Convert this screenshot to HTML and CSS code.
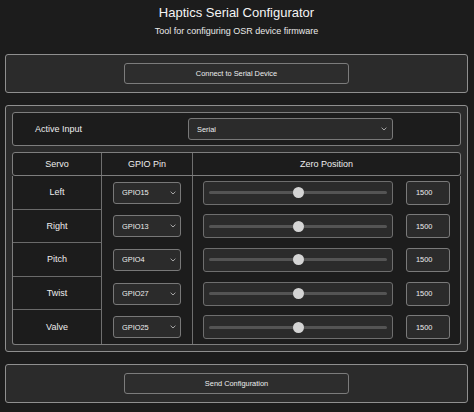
FILE: index.html
```html
<!DOCTYPE html>
<html lang="en">
<head>
<meta charset="utf-8">
<title>Haptics Serial Configurator</title>
<link rel="stylesheet" href="styles.css">
</head>
<body>
<div class="app">
  <header class="header">
    <h1 class="title">Haptics Serial Configurator</h1>
    <p class="subtitle">Tool for configuring OSR device firmware</p>
  </header>

  <section class="panel panel-first panel-action">
    <button class="btn">Connect to Serial Device</button>
  </section>

  <section class="panel panel-config">
    <div class="input-row">
      <div class="input-label">Active Input</div>
      <select class="select select-wide"><option>Serial</option></select>
    </div>

    <div class="servo-table">
      <div class="thead">
        <div class="th col-servo">Servo</div>
        <div class="th col-gpio">GPIO Pin</div>
        <div class="th">Zero Position</div>
      </div>
      <div class="tbody">
        <div class="tr">
          <div class="td col-servo name">Left</div>
          <div class="td col-gpio"><select class="select select-pin"><option>GPIO15</option></select></div>
          <div class="td zero"><div class="slider-box"><input class="range" type="range" min="1000" max="2000" value="1500"></div><input class="value" type="text" value="1500"></div>
        </div>
        <div class="tr">
          <div class="td col-servo name">Right</div>
          <div class="td col-gpio"><select class="select select-pin"><option>GPIO13</option></select></div>
          <div class="td zero"><div class="slider-box"><input class="range" type="range" min="1000" max="2000" value="1500"></div><input class="value" type="text" value="1500"></div>
        </div>
        <div class="tr">
          <div class="td col-servo name">Pitch</div>
          <div class="td col-gpio"><select class="select select-pin"><option>GPIO4</option></select></div>
          <div class="td zero"><div class="slider-box"><input class="range" type="range" min="1000" max="2000" value="1500"></div><input class="value" type="text" value="1500"></div>
        </div>
        <div class="tr">
          <div class="td col-servo name">Twist</div>
          <div class="td col-gpio"><select class="select select-pin"><option>GPIO27</option></select></div>
          <div class="td zero"><div class="slider-box"><input class="range" type="range" min="1000" max="2000" value="1500"></div><input class="value" type="text" value="1500"></div>
        </div>
        <div class="tr">
          <div class="td col-servo name last">Valve</div>
          <div class="td col-gpio"><select class="select select-pin"><option>GPIO25</option></select></div>
          <div class="td zero"><div class="slider-box"><input class="range" type="range" min="1000" max="2000" value="1500"></div><input class="value" type="text" value="1500"></div>
        </div>
      </div>
    </div>
  </section>

  <section class="panel panel-action">
    <button class="btn">Send Configuration</button>
  </section>
</div>
</body>
</html>
```

FILE: styles.css
```css
* { box-sizing: border-box; }

body {
  margin: 0;
  background: #1c1c1c;
  color: #ededed;
  font-family: "Liberation Sans", Arial, Helvetica, sans-serif;
}

.app {
  padding: 5px 6px 0 5px;
}

.header {
  text-align: center;
}

.title {
  margin: 0;
  font-size: 13px;
  font-weight: normal;
  line-height: 16px;
  color: #f4f4f4;
}

.subtitle {
  margin: 4px 0 0;
  font-size: 9px;
  line-height: 12px;
  color: #eaeaea;
}

.panel {
  margin-top: 12px;
  background: #2b2b2b;
  border: 1px solid #8f8f8f;
  border-radius: 3px;
}

.panel-first {
  margin-top: 17px;
}

.panel-action {
  padding: 8px;
  display: flex;
  justify-content: center;
}

.btn {
  width: 225px;
  height: 21px;
  margin: 0;
  background: #2d2d2d;
  border: 1px solid #7c7c7c;
  border-radius: 3px;
  color: #eeeeee;
  font-family: "Liberation Sans", Arial, sans-serif;
  font-size: 7.4px;
  padding: 0;
}

.panel-config {
  padding: 6px;
}

.input-row {
  display: flex;
  align-items: center;
  height: 34px;
  border: 1px solid #7e7e7e;
  border-radius: 3px;
  background: #1c1c1c;
}

.input-label {
  width: 91px;
  text-align: center;
  font-size: 9px;
}

.select {
  -webkit-appearance: none;
  appearance: none;
  margin: 0;
  height: 22px;
  background-color: #2b2b2b;
  background-image: url("data:image/svg+xml,%3Csvg xmlns='http://www.w3.org/2000/svg' width='6' height='4' viewBox='0 0 6 4'%3E%3Cpath d='M0.6 0.7 L3 3 L5.4 0.7' fill='none' stroke='%23b5b5b5' stroke-width='0.9'/%3E%3C/svg%3E");
  background-repeat: no-repeat;
  background-position: right 4px center;
  background-size: 6px 4px;
  border: 1px solid #787878;
  border-radius: 3px;
  color: #eeeeee;
  font-family: "Liberation Sans", Arial, sans-serif;
  font-size: 7.4px;
  padding: 0 12px 0 8px;
}

.select-wide {
  margin-left: 84px;
  width: 205px;
  background-position: right 5px center;
}

.select-pin {
  width: 68px;
}

.servo-table {
  margin-top: 6px;
}

.thead,
.tr {
  display: grid;
  grid-template-columns: 89px 91px 1fr;
}

.thead {
  height: 24px;
  border: 1px solid #7e7e7e;
  border-radius: 3px;
  background: #1c1c1c;
}

.th {
  display: flex;
  align-items: center;
  justify-content: center;
  font-size: 9px;
}

.col-servo,
.col-gpio {
  border-right: 1px solid #6f6f6f;
}

.tbody {
  border: 1px solid #7e7e7e;
  border-top: none;
  border-radius: 0 0 3px 3px;
  background: #1c1c1c;
}

.tr {
  height: 33.6px;
}

.td {
  display: flex;
  align-items: center;
  justify-content: center;
}

.name {
  font-size: 9px;
  border-bottom: 1px solid #6a6a6a;
}

.name.last {
  border-bottom: none;
}

.zero {
  gap: 13px;
}

.slider-box {
  width: 190px;
  height: 24px;
  display: flex;
  align-items: center;
  justify-content: center;
  background: #2b2b2b;
  border: 1px solid #6e6e6e;
  border-radius: 3px;
}

.range {
  -webkit-appearance: none;
  appearance: none;
  width: 178px;
  height: 11px;
  margin: 0;
  background: transparent;
}

.range::-webkit-slider-runnable-track {
  height: 3px;
  background: #545454;
  border-radius: 2px;
}

.range::-webkit-slider-thumb {
  -webkit-appearance: none;
  appearance: none;
  width: 11px;
  height: 11px;
  margin-top: -4px;
  border-radius: 50%;
  background: #d4d4d4;
  border: none;
}

.value {
  width: 44px;
  height: 24px;
  margin: 0;
  padding: 0 0 0 9px;
  background: #2b2b2b;
  border: 1px solid #7a7a7a;
  border-radius: 3px;
  color: #eeeeee;
  font-family: "Liberation Sans", Arial, sans-serif;
  font-size: 7.4px;
}
```
